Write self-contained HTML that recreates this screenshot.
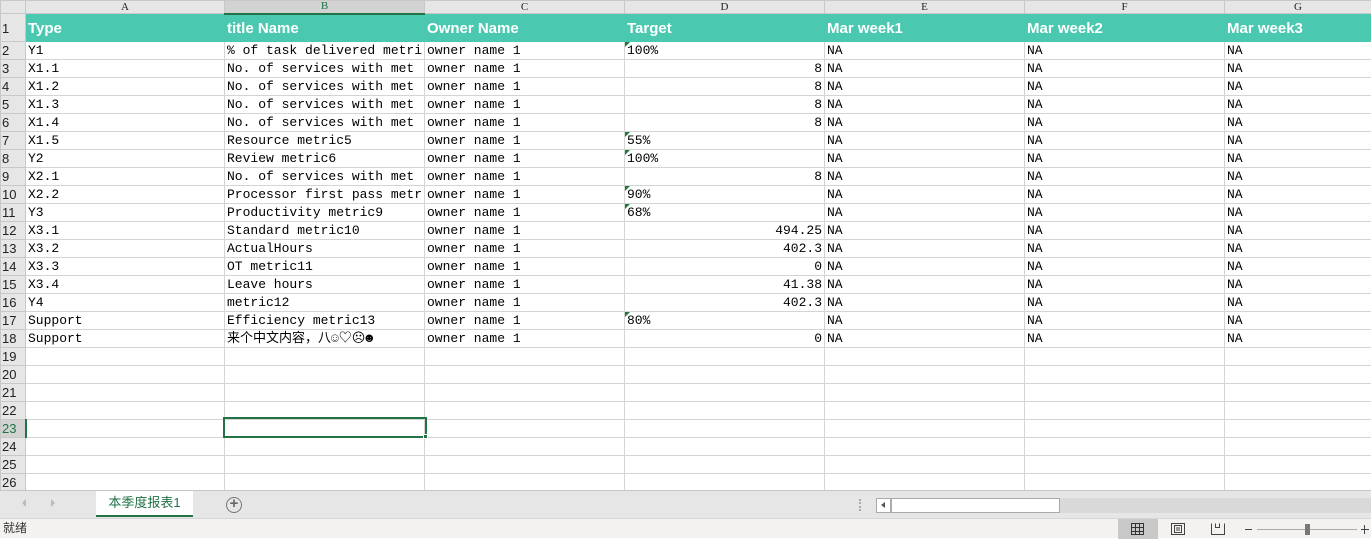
<!DOCTYPE html>
<html><head><meta charset="utf-8"><style>
*{margin:0;padding:0;box-sizing:border-box}
body{width:1371px;height:538px;overflow:hidden;background:#fff;position:relative;font-family:"Liberation Mono","Noto Sans CJK SC",monospace;font-size:13px;color:#000}
table{border-collapse:collapse;table-layout:fixed;position:absolute;left:0;top:0;width:1371px}
td{border:1px solid #d4d4d4;height:18px;padding:0 2px;white-space:nowrap;overflow:hidden;line-height:16px;vertical-align:bottom;position:relative}
tr.ch td{height:13px;background:#e6e6e6;border-color:#c8c8c8;text-align:center;font-family:"Liberation Serif",serif;font-size:11px;line-height:11px;vertical-align:middle;color:#222}
tr.ch td.sel{background:#d2d2d2;color:#217346;border-bottom:2px solid #217346}
td.rh{background:#e6e6e6;border-color:#c8c8c8;text-align:left;font-family:"Liberation Sans",sans-serif;font-size:13px;padding-left:1px;color:#222}
td.rh.sel{background:#d2d2d2;color:#217346;border-right:2px solid #217346}
tr.h td{height:28px;background:#4bc9b0;border-color:#4bc9b0;color:#fff;font-family:"Liberation Sans",sans-serif;font-weight:bold;font-size:15px;line-height:20px;vertical-align:bottom;padding-bottom:2px}
tr.h td.rh{background:#e6e6e6;border-color:#c8c8c8;color:#222;font-weight:normal;font-size:13px}
td.r{text-align:right}
td.p::before{content:"";position:absolute;left:0;top:0;border-top:5px solid #1f7a3a;border-right:5px solid transparent}
.cj{font-family:"Liberation Mono","Noto Sans CJK SC",monospace}
</style></head><body>
<table>
<colgroup><col style="width:25px"><col style="width:199px"><col style="width:200px"><col style="width:200px"><col style="width:200px"><col style="width:200px"><col style="width:200px"><col style="width:147px"></colgroup>
<tr class="ch"><td></td><td>A</td><td class="sel">B</td><td>C</td><td>D</td><td>E</td><td>F</td><td>G</td></tr>
<tr class="h"><td class="rh">1</td><td>Type</td><td>title Name</td><td>Owner Name</td><td>Target</td><td>Mar week1</td><td>Mar week2</td><td>Mar week3</td></tr>
<tr><td class="rh">2</td><td>Y1</td><td>% of task delivered metri</td><td>owner name 1</td><td class="p">100%</td><td>NA</td><td>NA</td><td>NA</td></tr>
<tr><td class="rh">3</td><td>X1.1</td><td>No. of services with  met</td><td>owner name 1</td><td class="r">8</td><td>NA</td><td>NA</td><td>NA</td></tr>
<tr><td class="rh">4</td><td>X1.2</td><td>No. of services with  met</td><td>owner name 1</td><td class="r">8</td><td>NA</td><td>NA</td><td>NA</td></tr>
<tr><td class="rh">5</td><td>X1.3</td><td>No. of services with  met</td><td>owner name 1</td><td class="r">8</td><td>NA</td><td>NA</td><td>NA</td></tr>
<tr><td class="rh">6</td><td>X1.4</td><td>No. of services with  met</td><td>owner name 1</td><td class="r">8</td><td>NA</td><td>NA</td><td>NA</td></tr>
<tr><td class="rh">7</td><td>X1.5</td><td>Resource metric5</td><td>owner name 1</td><td class="p">55%</td><td>NA</td><td>NA</td><td>NA</td></tr>
<tr><td class="rh">8</td><td>Y2</td><td>Review metric6</td><td>owner name 1</td><td class="p">100%</td><td>NA</td><td>NA</td><td>NA</td></tr>
<tr><td class="rh">9</td><td>X2.1</td><td>No. of services with  met</td><td>owner name 1</td><td class="r">8</td><td>NA</td><td>NA</td><td>NA</td></tr>
<tr><td class="rh">10</td><td>X2.2</td><td>Processor first pass metr</td><td>owner name 1</td><td class="p">90%</td><td>NA</td><td>NA</td><td>NA</td></tr>
<tr><td class="rh">11</td><td>Y3</td><td>Productivity metric9</td><td>owner name 1</td><td class="p">68%</td><td>NA</td><td>NA</td><td>NA</td></tr>
<tr><td class="rh">12</td><td>X3.1</td><td>Standard metric10</td><td>owner name 1</td><td class="r">494.25</td><td>NA</td><td>NA</td><td>NA</td></tr>
<tr><td class="rh">13</td><td>X3.2</td><td>ActualHours</td><td>owner name 1</td><td class="r">402.3</td><td>NA</td><td>NA</td><td>NA</td></tr>
<tr><td class="rh">14</td><td>X3.3</td><td>OT metric11</td><td>owner name 1</td><td class="r">0</td><td>NA</td><td>NA</td><td>NA</td></tr>
<tr><td class="rh">15</td><td>X3.4</td><td>Leave hours</td><td>owner name 1</td><td class="r">41.38</td><td>NA</td><td>NA</td><td>NA</td></tr>
<tr><td class="rh">16</td><td>Y4</td><td>metric12</td><td>owner name 1</td><td class="r">402.3</td><td>NA</td><td>NA</td><td>NA</td></tr>
<tr><td class="rh">17</td><td>Support</td><td>Efficiency metric13</td><td>owner name 1</td><td class="p">80%</td><td>NA</td><td>NA</td><td>NA</td></tr>
<tr><td class="rh">18</td><td>Support</td><td class="cj">来个中文内容，八☺♡☹☻</td><td>owner name 1</td><td class="r">0</td><td>NA</td><td>NA</td><td>NA</td></tr>
<tr><td class="rh">19</td><td></td><td></td><td></td><td></td><td></td><td></td><td></td></tr>
<tr><td class="rh">20</td><td></td><td></td><td></td><td></td><td></td><td></td><td></td></tr>
<tr><td class="rh">21</td><td></td><td></td><td></td><td></td><td></td><td></td><td></td></tr>
<tr><td class="rh">22</td><td></td><td></td><td></td><td></td><td></td><td></td><td></td></tr>
<tr><td class="rh sel">23</td><td></td><td></td><td></td><td></td><td></td><td></td><td></td></tr>
<tr><td class="rh">24</td><td></td><td></td><td></td><td></td><td></td><td></td><td></td></tr>
<tr><td class="rh">25</td><td></td><td></td><td></td><td></td><td></td><td></td><td></td></tr>
<tr><td class="rh">26</td><td></td><td></td><td></td><td></td><td></td><td></td><td></td></tr>
</table>
<div style="position:absolute;left:223px;top:417px;width:204px;height:21px;border:2px solid #217346"></div>
<div style="position:absolute;left:423px;top:434px;width:5px;height:5px;background:#217346;border:1px solid #fff"></div>
<div style="position:absolute;left:0;top:490px;width:1371px;height:28px;background:#e6e6e6;border-top:1px solid #c6c6c6;font-family:'Liberation Sans','Noto Sans CJK SC',sans-serif">
 <div style="position:absolute;left:22px;top:8px;width:0;height:0;border-top:4px solid transparent;border-bottom:4px solid transparent;border-right:4px solid #bbb"></div>
 <div style="position:absolute;left:51px;top:8px;width:0;height:0;border-top:4px solid transparent;border-bottom:4px solid transparent;border-left:4px solid #bbb"></div>
 <div style="position:absolute;left:96px;top:0;width:97px;height:26px;background:#fff;border-bottom:2px solid #217346;color:#217346;font-size:13px;text-align:center;line-height:24px">本季度报表1</div>
 <div style="position:absolute;left:226px;top:6px;width:16px;height:16px;border:1.5px solid #777;border-radius:50%;color:#666;font-size:15px;line-height:12px;text-align:center;font-weight:bold">+</div>
 <div style="position:absolute;left:859px;top:8px;width:2px;height:12px;border-left:2px dotted #aaa"></div>
 <div style="position:absolute;left:876px;top:7px;width:495px;height:15px;background:#d9d9d9"></div>
 <div style="position:absolute;left:876px;top:7px;width:15px;height:15px;background:#fff;border:1px solid #aaa"></div>
 <div style="position:absolute;left:881px;top:11px;width:0;height:0;border-top:3.5px solid transparent;border-bottom:3.5px solid transparent;border-right:4px solid #555"></div>
 <div style="position:absolute;left:891px;top:7px;width:169px;height:15px;background:#fff;border:1px solid #aaa"></div>
</div>
<div style="position:absolute;left:0;top:518px;width:1371px;height:20px;background:#f3f2f1;border-top:1px solid #d6d6d6;font-family:'Liberation Sans','Noto Sans CJK SC',sans-serif;font-size:12px;line-height:19px;color:#333">
 <span style="position:absolute;left:3px">就绪</span>
 <div style="position:absolute;left:1118px;top:0;width:40px;height:20px;background:#c8c8c8"></div>
 <svg style="position:absolute;left:1131px;top:4px" width="13" height="12"><rect x="0.5" y="0.5" width="12" height="11" fill="none" stroke="#333"/><path d="M4.5 0v12M8.5 0v12M0 4.5h13M0 8.5h13" stroke="#333"/></svg>
 <svg style="position:absolute;left:1171px;top:4px" width="14" height="12"><rect x="0.5" y="0.5" width="13" height="11" fill="none" stroke="#444"/><rect x="3.5" y="2.5" width="7" height="7" fill="none" stroke="#444"/><path d="M5 5h4M5 7h4" stroke="#444"/></svg>
 <svg style="position:absolute;left:1211px;top:4px" width="14" height="12"><path d="M0.5 0.5v11h13v-11M4.5 0.5v4h4v-4" fill="none" stroke="#444"/></svg>
 <div style="position:absolute;left:1245px;top:10px;width:7px;height:1px;background:#444"></div>
 <div style="position:absolute;left:1257px;top:10px;width:100px;height:1px;background:#aaa"></div>
 <div style="position:absolute;left:1305px;top:5px;width:5px;height:11px;background:#777"></div>
 <div style="position:absolute;left:1361px;top:10px;width:8px;height:1px;background:#444"></div>
 <div style="position:absolute;left:1364px;top:6px;width:1px;height:9px;background:#444"></div>
</div>
</body></html>
